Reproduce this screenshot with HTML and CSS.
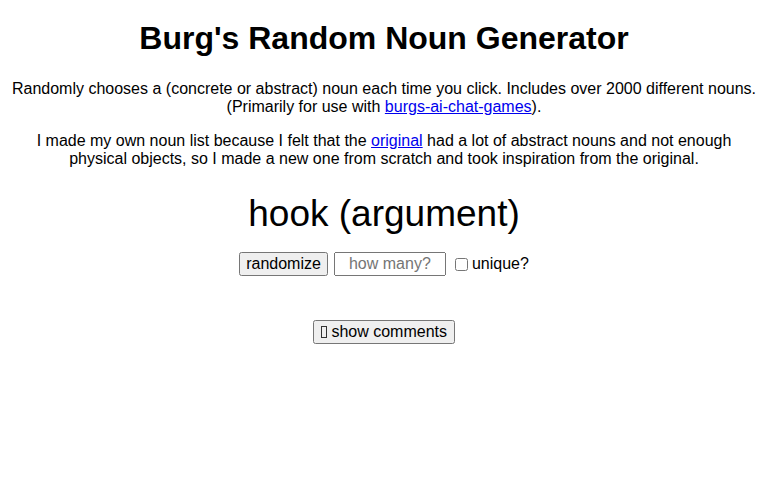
FILE: index.html
```html
<!DOCTYPE html>
<html>
<head>
<meta charset="utf-8">
<link rel="stylesheet" href="styles.css">
</head>
<body>
<h1 class="title">Burg's Random Noun Generator</h1>
<p class="text">Randomly chooses a (concrete or abstract) noun each time you click. Includes over 2000 different nouns.<br>(Primarily for use with <a href="#">burgs-ai-chat-games</a>).</p>
<p class="text">I made my own noun list because I felt that the <a href="#">original</a> had a lot of abstract nouns and not enough physical objects, so I made a new one from scratch and took inspiration from the original.</p>
<div class="noun">hook (argument)</div>
<div class="controls">
  <button class="btn">randomize</button>
  <input class="count" type="text" placeholder="how many?">
  <label class="unique"><input class="check" type="checkbox">unique?</label>
</div>
<div class="comments">
  <button class="btn wide"><span class="tofu"></span> show comments</button>
</div>
</body>
</html>
```
FILE: styles.css
```css
body {
  font-family: "Liberation Sans", Arial, sans-serif;
  text-align: center;
  margin: 0 8px;
  color: #000;
  background: #fff;
}
.title {
  font-size: 32px;
  margin: 20px 0 23px;
}
.text {
  line-height: 18px;
}
.noun {
  font-size: 37px;
  margin: 25px 0 17px;
}
.controls {
  display: flex;
  justify-content: center;
  align-items: center;
}
.btn {
  font-family: "Liberation Sans", Arial, sans-serif;
  font-size: 16px;
  padding: 1px 5px;
}
.wide {
  padding: 1px 6px;
}
.count {
  font-family: "Liberation Sans", Arial, sans-serif;
  font-size: 16px;
  width: 112px;
  box-sizing: border-box;
  text-align: center;
  margin-left: 6px;
}
.unique {
  display: flex;
  align-items: center;
  font-size: 16px;
  margin-left: 6px;
}
.check {
  margin: 0 4px 0 3px;
  width: 13px;
  height: 13px;
}
.comments {
  margin-top: 44px;
}
.tofu {
  display: inline-block;
  width: 4px;
  height: 10px;
  border: 1px solid #333;
  vertical-align: -1px;
}
```
